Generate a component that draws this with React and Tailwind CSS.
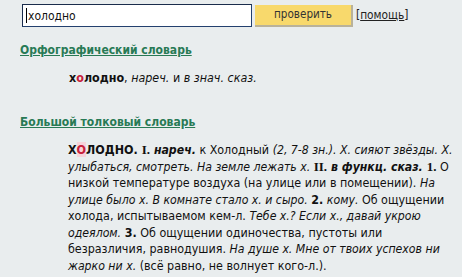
export default function App() {
  const font = "font-['DejaVu_Sans_Condensed','Liberation_Sans',sans-serif]";
  const stress = "text-[#c8203c] bg-[#f6d3da]";
  const serif = "font-['Liberation_Serif',serif] text-[13px]";
  return (
    <div className={`h-[277px] w-[462px] overflow-hidden bg-[#e9edee] text-[12.4px] text-[#111] ${font}`}>
      <div className="flex items-center pl-[22px] pt-[4px]">
        <div className="flex h-[23px] w-[230px] items-center border border-[#23406e] border-l-[#1a2c4c] border-t-[#1a2c4c] bg-white pl-[3px] text-[12px]">
          <span className="mr-[1px] h-[15px] w-px bg-black" />
          холодно
        </div>
        <button className="ml-[3px] h-[22px] w-[98px] border-b-2 border-r-2 border-b-[#b9b29a] border-r-[#b9b29a] bg-[#f8d96c] text-[11.6px] text-[#333]">
          проверить
        </button>
        <span className="ml-[3px] text-[11.8px] text-[#222]">
          [<span className="underline">помощь</span>]
        </span>
      </div>

      <div className="mt-[15px] pl-[20px] text-[12px] font-bold leading-[16px] text-[#287a55] underline">
        Орфографический словарь
      </div>
      <div className="mt-[12px] pl-[69px] leading-[16px]">
        <b>
          х<span className="text-[#c8203c]">о</span>лодно
        </b>
        , <i>нареч.</i> и <i>в знач. сказ.</i>
      </div>

      <div className="mt-[28px] pl-[20px] text-[12px] font-bold leading-[16px] text-[#287a55] underline">
        Большой толковый словарь
      </div>
      <p className="mt-[12px] pl-[68px] pr-[6px] leading-[15.5px] [&_i]:text-[12.2px]">
        <b>
          Х<span className={stress}>О</span>ЛОДНО. <span className={serif}>I.</span> <i>нареч.</i>
        </b>{" "}
        к Холодный <i>(2, 7-8 зн.). Х. сияют звёзды. Х. улыбаться, смотреть. На земле лежать х.</i>{" "}
        <b>
          <span className={serif}>II.</span> <i>в функц. сказ.</i> <span className={serif}>1.</span>
        </b>{" "}
        О низкой температуре воздуха (на улице или в помещении).{" "}
        <i>На улице было х. В комнате стало х. и сыро.</i> <b>2.</b> <i>кому.</i> Об ощущении холода,
        испытываемом кем-л. <i>Тебе х.? Если х., давай укрою одеялом.</i> <b>3.</b> Об ощущении
        одиночества, пустоты или безразличия, равнодушия.{" "}
        <i>На душе х. Мне от твоих успехов ни жарко ни х.</i> (всё равно, не волнует кого-л.).
      </p>
    </div>
  );
}
